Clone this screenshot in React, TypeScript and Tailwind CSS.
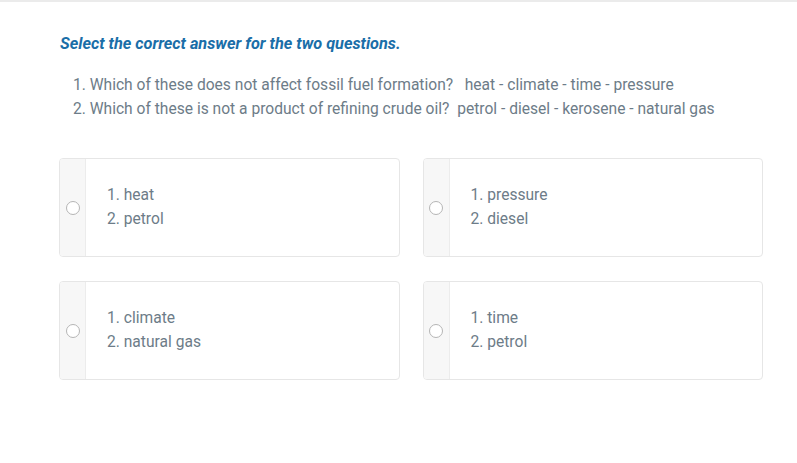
import React from "react";

const options = [
  ["1. heat", "2. petrol"],
  ["1. pressure", "2. diesel"],
  ["1. climate", "2. natural gas"],
  ["1. time", "2. petrol"],
];

export default function App() {
  return (
    <div className="w-[797px] h-[463px] bg-white border-t-2 border-[#ebebeb]" style={{ fontFamily: "Roboto, 'Liberation Sans', sans-serif" }}>
      <div className="pl-[59px] pr-[34px] pt-[32px]">
        <h1 className="text-[16.3px] leading-[20px] font-bold italic text-[#1a6ea8] pl-px">
          Select the correct answer for the two questions.
        </h1>
        <div className="mt-[19px] pl-[14px] text-[15.6px] leading-[24px] text-[#6d7c88]">
          <div>1. Which of these does not affect fossil fuel formation?&nbsp;&nbsp; heat - climate - time - pressure</div>
          <div>2. Which of these is not a product of refining crude oil?&nbsp; petrol - diesel - kerosene - natural gas</div>
        </div>
        <div className="mt-[37px] grid grid-cols-2 gap-x-[23px] gap-y-[24px] w-[704px]">
          {options.map((o, i) => (
            <div key={i} className="flex h-[99px] rounded-[4px] border border-[#e6e6e6] overflow-hidden">
              <div className="w-[26px] bg-[#f7f7f7] border-r border-[#ececec] flex items-center justify-center">
                <div className="w-[14px] h-[14px] rounded-full border border-[#b5b5b5] bg-white" />
              </div>
              <div className="flex flex-col justify-center pl-[21px] pb-[2px] text-[15.6px] leading-[24px] text-[#6d7c88]">
                <div>{o[0]}</div>
                <div>{o[1]}</div>
              </div>
            </div>
          ))}
        </div>
      </div>
    </div>
  );
}
